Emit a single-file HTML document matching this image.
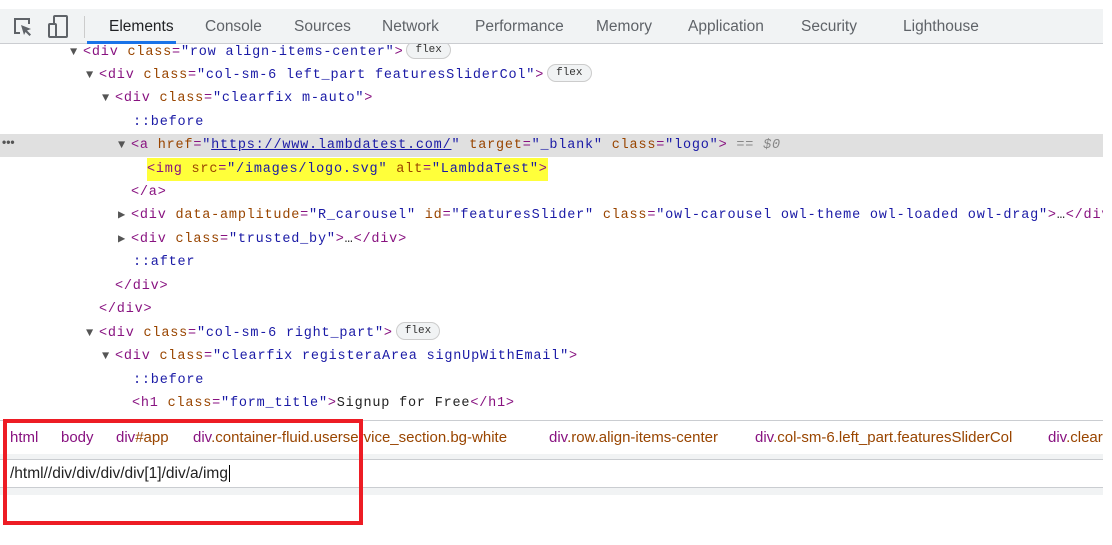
<!DOCTYPE html>
<html><head><meta charset="utf-8"><style>
body{margin:0;width:1112px;height:545px;overflow:hidden;background:#fff;position:relative;font-family:"Liberation Sans",sans-serif}
.top{position:absolute;left:0;top:0;width:1112px;height:9px;background:#fff}
.tabs{position:absolute;left:0;top:9px;width:1103px;height:34px;background:#f1f3f4;border-bottom:1px solid #cbcdd1;z-index:2}
.tab{position:absolute;top:9px;font-size:15.5px;color:#5f6368}
.tab.act{color:#202124}
.ul{position:absolute;left:87px;top:32px;width:89px;height:3px;background:#1a73e8}
.code{position:absolute;left:0;top:44px;width:1103px;height:376px;overflow:hidden;font-family:"Liberation Mono",monospace;font-size:13.5px;letter-spacing:0.8px}
.r{position:absolute;left:0;height:23.4px;line-height:23.4px;white-space:pre;width:1103px}
.t{color:#881280}.a{color:#994500}.v{color:#1a1aa6}.p{color:#1a1aa6}.k{color:#222}
.arr{position:absolute;font-size:12px;color:#555;letter-spacing:0}
.badge{display:inline-block;font-size:11px;letter-spacing:0;line-height:16px;padding:0 8px;border:1px solid #ccc;border-radius:9px;background:#f1f3f4;color:#333;vertical-align:middle;margin-left:3px;position:relative;top:-1px}
.crumbs{position:absolute;left:0;top:420px;width:1103px;height:33px;border-top:1px solid #cacdd1;border-bottom:1px solid #cacdd1;font-size:15px;white-space:nowrap;overflow:hidden;background:#fff}
.crumbs .c{position:absolute;top:8px;color:#881280}
.crumbs .c i{font-style:normal;color:#994500}
.gap{position:absolute;left:0;top:454px;width:1103px;height:5px;background:#f1f3f4;border-bottom:1px solid #cacdd1}
.inp{position:absolute;left:0;top:460px;width:1103px;height:27px;border-bottom:1px solid #cacdd1;font-size:15.5px}
.gap2{position:absolute;left:0;top:488px;width:1103px;height:7px;background:#f1f3f4}
.red{position:absolute;left:3px;top:419px;width:352px;height:98px;border:4px solid #ed1c24}
</style></head><body>
<div class="top"></div>
<div class="tabs">
<svg style="position:absolute;left:12px;top:7px" width="22" height="22" viewBox="0 0 22 22"><path d="M8 17H3V3h14v5" fill="none" stroke="#5f6368" stroke-width="2"/><path d="M9 9l10 4-4 1.5 4 4-1.5 1.5-4-4L12 19z" fill="#5f6368"/></svg>
<svg style="position:absolute;left:47px;top:6px" width="22" height="24" viewBox="0 0 22 24"><rect x="7" y="1" width="13" height="21" rx="1" fill="none" stroke="#5f6368" stroke-width="2"/><rect x="2" y="9" width="7" height="13" rx="1" fill="#f1f3f4" stroke="#5f6368" stroke-width="2"/></svg>
<div style="position:absolute;left:84px;top:7px;width:1px;height:22px;background:#ccc"></div>
<span class="tab act" style="left:109px">Elements</span>
<span class="tab" style="left:205px">Console</span>
<span class="tab" style="left:294px">Sources</span>
<span class="tab" style="left:382px">Network</span>
<span class="tab" style="left:475px">Performance</span>
<span class="tab" style="left:596px">Memory</span>
<span class="tab" style="left:688px">Application</span>
<span class="tab" style="left:801px">Security</span>
<span class="tab" style="left:903px">Lighthouse</span>
<div class="ul"></div>
</div>
<div class="code">
<div class="r" style="top:-3.2px"><span class="arr" style="left:70px">▼</span><span style="position:absolute;left:83px"><span class="t">&lt;div</span> <span class="a">class</span><span class="t">=</span><span class="v">"row align-items-center"</span><span class="t">&gt;</span><span class="badge">flex</span></span></div>
<div class="r" style="top:19.75px"><span class="arr" style="left:86px">▼</span><span style="position:absolute;left:99px"><span class="t">&lt;div</span> <span class="a">class</span><span class="t">=</span><span class="v">"col-sm-6 left_part featuresSliderCol"</span><span class="t">&gt;</span><span class="badge">flex</span></span></div>
<div class="r" style="top:43.2px"><span class="arr" style="left:102px">▼</span><span style="position:absolute;left:115px"><span class="t">&lt;div</span> <span class="a">class</span><span class="t">=</span><span class="v">"clearfix m-auto"</span><span class="t">&gt;</span></span></div>
<div class="r" style="top:66.65px"><span class="p" style="position:absolute;left:133px">::before</span></div>
<div class="r" style="top:90.1px;background:#e0e0e0"><span style="position:absolute;left:2px;color:#555;font-family:'Liberation Sans';font-weight:bold;font-size:12px;letter-spacing:0;top:-3px">•••</span><span class="arr" style="left:118px">▼</span><span style="position:absolute;left:131px"><span class="t">&lt;a</span> <span class="a">href</span><span class="t">=</span><span class="v">"<u>https://www.lambdatest.com/</u>"</span> <span class="a">target</span><span class="t">=</span><span class="v">"_blank"</span> <span class="a">class</span><span class="t">=</span><span class="v">"logo"</span><span class="t">&gt;</span> <span style="color:#888">== <i>$0</i></span></span></div>
<div class="r" style="top:113.55px"><span style="position:absolute;left:147px;background:#ffff3a"><span class="t">&lt;img</span> <span class="a">src</span><span class="t">=</span><span class="v">"/images/logo.svg"</span> <span class="a">alt</span><span class="t">=</span><span class="v">"LambdaTest"</span><span class="t">&gt;</span></span></div>
<div class="r" style="top:137px"><span class="t" style="position:absolute;left:131px">&lt;/a&gt;</span></div>
<div class="r" style="top:160.45px"><span class="arr" style="left:118px">▶</span><span style="position:absolute;left:131px"><span class="t">&lt;div</span> <span class="a">data-amplitude</span><span class="t">=</span><span class="v">"R_carousel"</span> <span class="a">id</span><span class="t">=</span><span class="v">"featuresSlider"</span> <span class="a">class</span><span class="t">=</span><span class="v">"owl-carousel owl-theme owl-loaded owl-drag"</span><span class="t">&gt;</span><span class="k">…</span><span class="t">&lt;/div&gt;</span></span></div>
<div class="r" style="top:183.9px"><span class="arr" style="left:118px">▶</span><span style="position:absolute;left:131px"><span class="t">&lt;div</span> <span class="a">class</span><span class="t">=</span><span class="v">"trusted_by"</span><span class="t">&gt;</span><span class="k">…</span><span class="t">&lt;/div&gt;</span></span></div>
<div class="r" style="top:207.35px"><span class="p" style="position:absolute;left:133px">::after</span></div>
<div class="r" style="top:230.8px"><span class="t" style="position:absolute;left:115px">&lt;/div&gt;</span></div>
<div class="r" style="top:254.25px"><span class="t" style="position:absolute;left:99px">&lt;/div&gt;</span></div>
<div class="r" style="top:277.7px"><span class="arr" style="left:86px">▼</span><span style="position:absolute;left:99px"><span class="t">&lt;div</span> <span class="a">class</span><span class="t">=</span><span class="v">"col-sm-6 right_part"</span><span class="t">&gt;</span><span class="badge">flex</span></span></div>
<div class="r" style="top:301.15px"><span class="arr" style="left:102px">▼</span><span style="position:absolute;left:115px"><span class="t">&lt;div</span> <span class="a">class</span><span class="t">=</span><span class="v">"clearfix registeraArea signUpWithEmail"</span><span class="t">&gt;</span></span></div>
<div class="r" style="top:324.6px"><span class="p" style="position:absolute;left:133px">::before</span></div>
<div class="r" style="top:348.05px"><span style="position:absolute;left:132px"><span class="t">&lt;h1</span> <span class="a">class</span><span class="t">=</span><span class="v">"form_title"</span><span class="t">&gt;</span><span class="k">Signup for Free</span><span class="t">&lt;/h1&gt;</span></span></div>
<div class="r" style="top:371.5px"><span style="position:absolute;left:132px"><span class="t">&lt;form</span> <span class="a">class</span><span class="t">=</span><span class="v">"form"</span> <span class="a">id</span><span class="t">=</span><span class="v">"signupForm"</span> <span class="a">onsubmit</span><span class="t">=</span><span class="v">"signup(); return false;"</span></span></div>
</div>
<div class="crumbs">
<span class="c" style="left:10px">html</span>
<span class="c" style="left:61px">body</span>
<span class="c" style="left:116px">div<i>#app</i></span>
<span class="c" style="left:193px">div<i>.container-fluid.userservice_section.bg-white</i></span>
<span class="c" style="left:549px">div<i>.row.align-items-center</i></span>
<span class="c" style="left:755px">div<i>.col-sm-6.left_part.featuresSliderCol</i></span>
<span class="c" style="left:1048px">div<i>.clearfix</i></span>
</div>
<div class="gap"></div>
<div class="inp"><span style="position:absolute;left:10px;top:5px;color:#222">/html//div/div/div/div[1]/div/a/img<span style="border-left:1px solid #000;margin-left:1px"></span></span></div>
<div class="gap2"></div>
<div class="red"></div>
</body></html>
